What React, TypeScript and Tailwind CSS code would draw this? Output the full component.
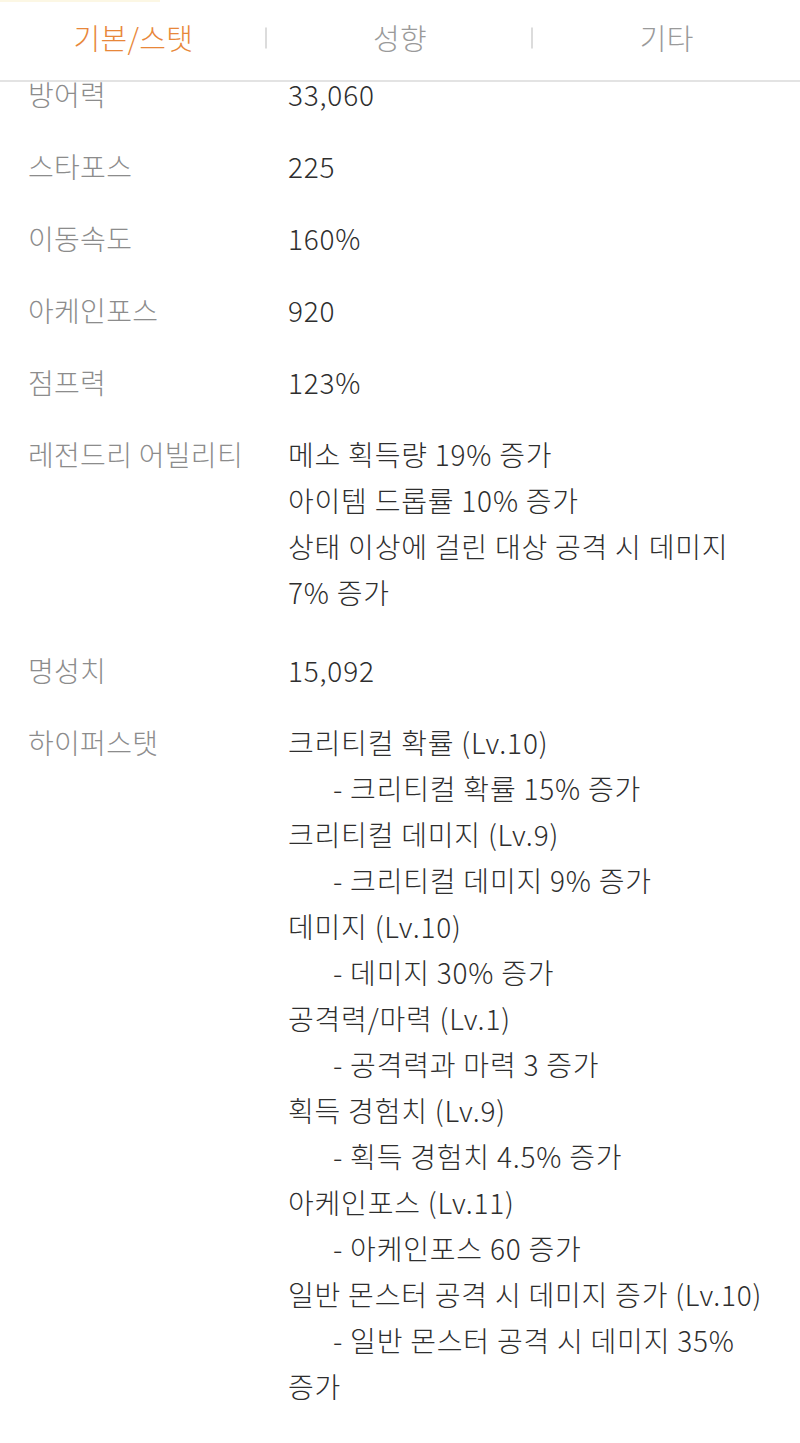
const font = { fontFamily: '"Noto Sans CJK KR", "Noto Sans", sans-serif' };

type Row = { label: string; lines: { text: string; sub?: boolean }[]; extra?: boolean };

const rows: Row[] = [
  { label: '방어력', lines: [{ text: '33,060' }] },
  { label: '스타포스', lines: [{ text: '225' }] },
  { label: '이동속도', lines: [{ text: '160%' }] },
  { label: '아케인포스', lines: [{ text: '920' }] },
  { label: '점프력', lines: [{ text: '123%' }] },
  {
    label: '레전드리 어빌리티',
    extra: true,
    lines: [
      { text: '메소 획득량 19% 증가' },
      { text: '아이템 드롭률 10% 증가' },
      { text: '상태 이상에 걸린 대상 공격 시 데미지' },
      { text: '7% 증가' },
    ],
  },
  { label: '명성치', lines: [{ text: '15,092' }] },
  {
    label: '하이퍼스탯',
    lines: [
      { text: '크리티컬 확률 (Lv.10)' },
      { text: '- 크리티컬 확률 15% 증가', sub: true },
      { text: '크리티컬 데미지 (Lv.9)' },
      { text: '- 크리티컬 데미지 9% 증가', sub: true },
      { text: '데미지 (Lv.10)' },
      { text: '- 데미지 30% 증가', sub: true },
      { text: '공격력/마력 (Lv.1)' },
      { text: '- 공격력과 마력 3 증가', sub: true },
      { text: '획득 경험치 (Lv.9)' },
      { text: '- 획득 경험치 4.5% 증가', sub: true },
      { text: '아케인포스 (Lv.11)' },
      { text: '- 아케인포스 60 증가', sub: true },
      { text: '일반 몬스터 공격 시 데미지 증가 (Lv.10)' },
      { text: '- 일반 몬스터 공격 시 데미지 35%', sub: true },
      { text: '증가' },
    ],
  },
];

const tabs = ['기본/스탯', '성향', '기타'];

export default function App() {
  return (
    <div className="min-h-[1443px] w-[800px] overflow-hidden bg-white font-light" style={font}>
      <div className="relative z-10 bg-white">
        <div className="h-[2px] w-[160px] bg-[#fcf7e4]" />
        <div className="flex h-[80px] items-center border-b-2 border-[#e3e3e3] pb-[6px]">
          {tabs.map((t, i) => (
            <div key={t} className="relative flex flex-1 items-center justify-center">
              <span
                className={
                  i === 0
                    ? 'text-[29px] tracking-[0.3px] text-[#e8873a]'
                    : 'text-[29px] tracking-[0.3px] text-[#9a9a9a]'
                }
              >
                {t}
              </span>
              {i < tabs.length - 1 && (
                <span className="absolute right-0 top-1/2 h-[21px] w-[2px] -translate-y-1/2 bg-[#dcdcdc]" />
              )}
            </div>
          ))}
        </div>
      </div>

      <div className="-mt-[24px] flex flex-col">
        {rows.map((r) => (
          <div key={r.label} className={r.extra ? 'flex pt-[13px] pb-[19px]' : 'flex py-[13px]'}>
            <div className="w-[288px] shrink-0 pl-[28px] text-[28px] leading-[46px] tracking-[0.3px] text-[#8c8c8c] whitespace-nowrap">
              {r.label}
            </div>
            <div className="flex flex-col text-[28px] leading-[46px] tracking-[0.8px] text-[#2e2e2e]">
              {r.lines.map((l, i) => (
                <div key={i} className={l.sub ? 'whitespace-nowrap pl-[45px]' : 'whitespace-nowrap'}>
                  {l.text}
                </div>
              ))}
            </div>
          </div>
        ))}
      </div>
    </div>
  );
}
